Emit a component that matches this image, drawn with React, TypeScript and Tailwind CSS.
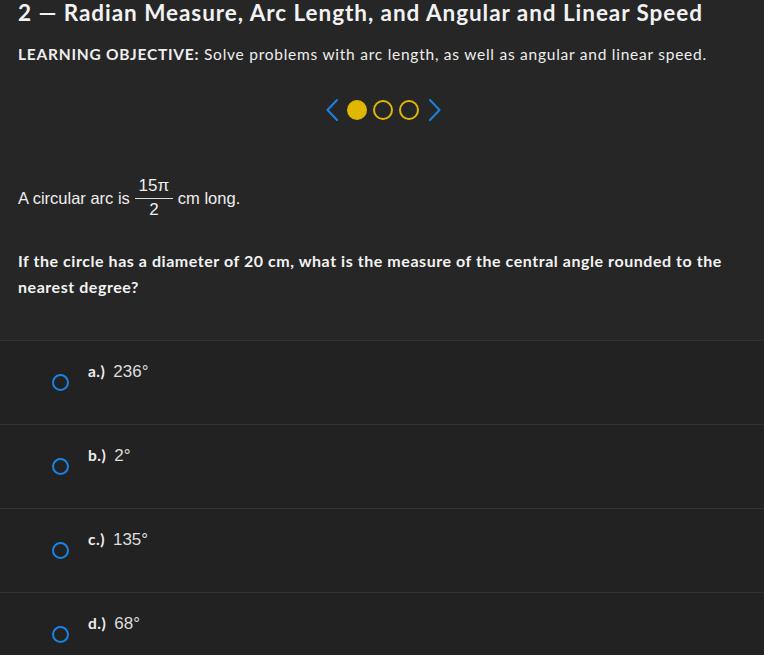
const answers = [
  { label: "a.)", value: "236°" },
  { label: "b.)", value: "2°" },
  { label: "c.)", value: "135°" },
  { label: "d.)", value: "68°" },
];

const Chevron = ({ dir }: { dir: "left" | "right" }) => (
  <svg width="12" height="22" viewBox="0 0 12 22" fill="none">
    <polyline
      points={dir === "left" ? "11,1 1.5,11 11,21" : "1,1 10.5,11 1,21"}
      stroke="#1a82e2"
      strokeWidth="2"
      strokeLinecap="round"
      strokeLinejoin="round"
    />
  </svg>
);

const App = (): JSX.Element => {
  return (
    <div className="min-h-screen bg-[#222222] font-['Lato',sans-serif] text-[#eeeeee]">
      <section className="bg-[#262626] px-[18px] pb-[40px] pt-[1px]">
        <h1 className="whitespace-nowrap text-[22.5px] font-bold leading-[24px] tracking-[0.95px] text-[#f2f2f2]">
          2 — Radian Measure, Arc Length, and Angular and Linear Speed
        </h1>

        <p className="mt-[19px] whitespace-nowrap text-[15.5px] leading-[20px] tracking-[0.75px] text-[#eeeeee]">
          <span className="font-bold">LEARNING OBJECTIVE:</span> Solve problems
          with arc length, as well as angular and linear speed.
        </p>

        <div className="mt-[35px] flex h-[22px] items-center justify-center pl-[2px]">
          <Chevron dir="left" />
          <span className="ml-[9px] h-[20px] w-[20px] rounded-full bg-[#e0b800]" />
          <span className="ml-[6px] h-[20px] w-[20px] rounded-full border-[2px] border-[#e0b800]" />
          <span className="ml-[6px] h-[20px] w-[20px] rounded-full border-[2px] border-[#e0b800]" />
          <span className="ml-[10px]">
            <Chevron dir="right" />
          </span>
        </div>

        <div className="mt-[55px] flex items-center font-['Liberation_Sans',Arial,sans-serif] text-[16.5px] text-[#eeeeee]">
          <span>A circular arc is</span>
          <span className="ml-[5px] mr-[5px] inline-flex flex-col items-center">
            <span className="pb-[2px] text-[17px] font-light leading-[20px]">15π</span>
            <span className="h-px w-[38px] bg-[#dddddd]" />
            <span className="pt-[1px] text-[17px] font-light leading-[20px]">2</span>
          </span>
          <span>cm long.</span>
        </div>

        <p className="mt-[28px] text-[16px] font-bold leading-[26px] tracking-[0.55px] text-[#f2f2f2]">
          If the circle has a diameter of 20 cm, what is the measure of the
          central angle rounded to the nearest degree?
        </p>
      </section>

      <ul className="border-t border-[#333333]">
        {answers.map((answer) => (
          <li
            key={answer.label}
            className="flex h-[84px] border-b border-[#333333] pl-[52px]"
          >
            <span className="mt-[33px] h-[17px] w-[17px] rounded-full border-[2px] border-[#1a82e2]" />
            <div className="ml-[19px] mt-[18px] flex items-baseline gap-[8px]">
              <span className="text-[15.5px] font-bold tracking-[0.5px]">{answer.label}</span>
              <span className="font-['Liberation_Sans',Arial,sans-serif] text-[17px] font-light text-[#dddddd]">
                {answer.value}
              </span>
            </div>
          </li>
        ))}
      </ul>
    </div>
  );
};

export default App;
